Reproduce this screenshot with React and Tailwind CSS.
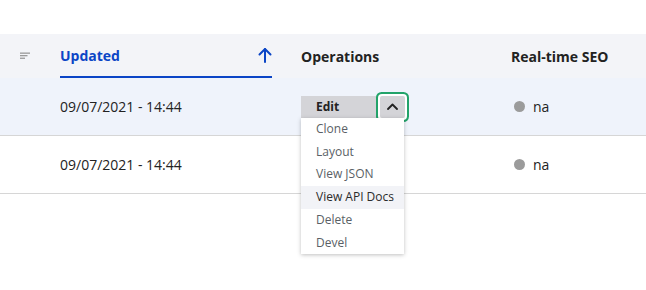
const menuItems = ["Clone", "Layout", "View JSON", "View API Docs", "Delete", "Devel"];

function SortIcon() {
  return (
    <svg width="12" height="8" viewBox="0 0 12 8" className="text-[#9a9a9a]">
      <rect x="0" y="0.5" width="10" height="1.3" fill="currentColor" />
      <rect x="0" y="3" width="7.5" height="1.3" fill="currentColor" />
      <rect x="0" y="5.6" width="5" height="1.3" fill="currentColor" />
    </svg>
  );
}

function ArrowUp() {
  return (
    <svg width="14" height="16" viewBox="0 0 14 16" fill="none" stroke="currentColor" strokeWidth="2" strokeLinecap="round" strokeLinejoin="round">
      <path d="M7 15V2" />
      <path d="M1.5 7.5L7 2l5.5 5.5" />
    </svg>
  );
}

function Status() {
  return (
    <div className="flex items-center gap-2 pl-[3px]">
      <span className="w-[11px] h-[11px] rounded-full bg-[#9b9b9b]" />
      <span className="text-[14px] text-[#222]">na</span>
    </div>
  );
}

function Operations({ open }) {
  return (
    <div className="relative flex items-center">
      <button className="w-[79px] h-[22px] bg-[#d4d4d8] text-left pl-[15px] text-[12px] font-bold text-[#222]">
        Edit
      </button>
      <button className="w-[25px] h-[22px] bg-[#d4d4d8] flex items-center justify-center rounded-[2px] ring-2 ring-[#22a36a] ring-offset-2 ring-offset-white">
        <svg width="11" height="7" viewBox="0 0 11 7" fill="none" stroke="#222" strokeWidth="1.8" strokeLinecap="round" strokeLinejoin="round">
          <path d="M1 6l4.5-4.5L10 6" />
        </svg>
      </button>
      {open && (
        <div className="absolute left-0 top-full w-[103px] bg-white shadow-[0_1px_4px_rgba(0,0,0,0.25)] z-10">
          {menuItems.map((item) => (
            <div
              key={item}
              className={`h-[22.75px] flex items-center pl-[15px] text-[12px] ${
                item === "View API Docs" ? "bg-[#f2f3f7] text-[#2b2b2b]" : "text-[#5a5f66]"
              }`}
            >
              {item}
            </div>
          ))}
        </div>
      )}
    </div>
  );
}

export default function App() {
  return (
    <div className="w-[646px] h-[290px] bg-white overflow-hidden" style={{ fontFamily: '"Open Sans", sans-serif' }}>
      <div className="h-[34px]" />

      {/* HEADER */}
      <div className="h-[44px] bg-[#f3f4f8] flex">
        <div className="w-[60px] flex items-center pl-[20px]">
          <SortIcon />
        </div>
        <div className="w-[241px] flex">
          <div className="w-[212px] h-full border-b-2 border-[#0b45c6] flex items-center justify-between text-[#0b45c6]">
            <span className="text-[14px] font-bold">Updated</span>
            <ArrowUp />
          </div>
        </div>
        <div className="w-[210px] flex items-center text-[14px] font-bold text-[#222]">Operations</div>
        <div className="flex-1 flex items-center text-[14px] font-bold text-[#222]">Real-time SEO</div>
      </div>

      {/* ROWS */}
      {[0, 1].map((i) => (
        <div
          key={i}
          className={`h-[58px] flex border-b border-[#d6d6d6] ${i === 0 ? "bg-[#eff3fb]" : "bg-white"}`}
        >
          <div className="w-[60px]" />
          <div className="w-[241px] flex items-center text-[14px] text-[#222]">09/07/2021 - 14:44</div>
          <div className="w-[210px] flex items-center">
            {i === 0 && <Operations open />}
          </div>
          <div className="flex-1 flex items-center">
            <Status />
          </div>
        </div>
      ))}
    </div>
  );
}
